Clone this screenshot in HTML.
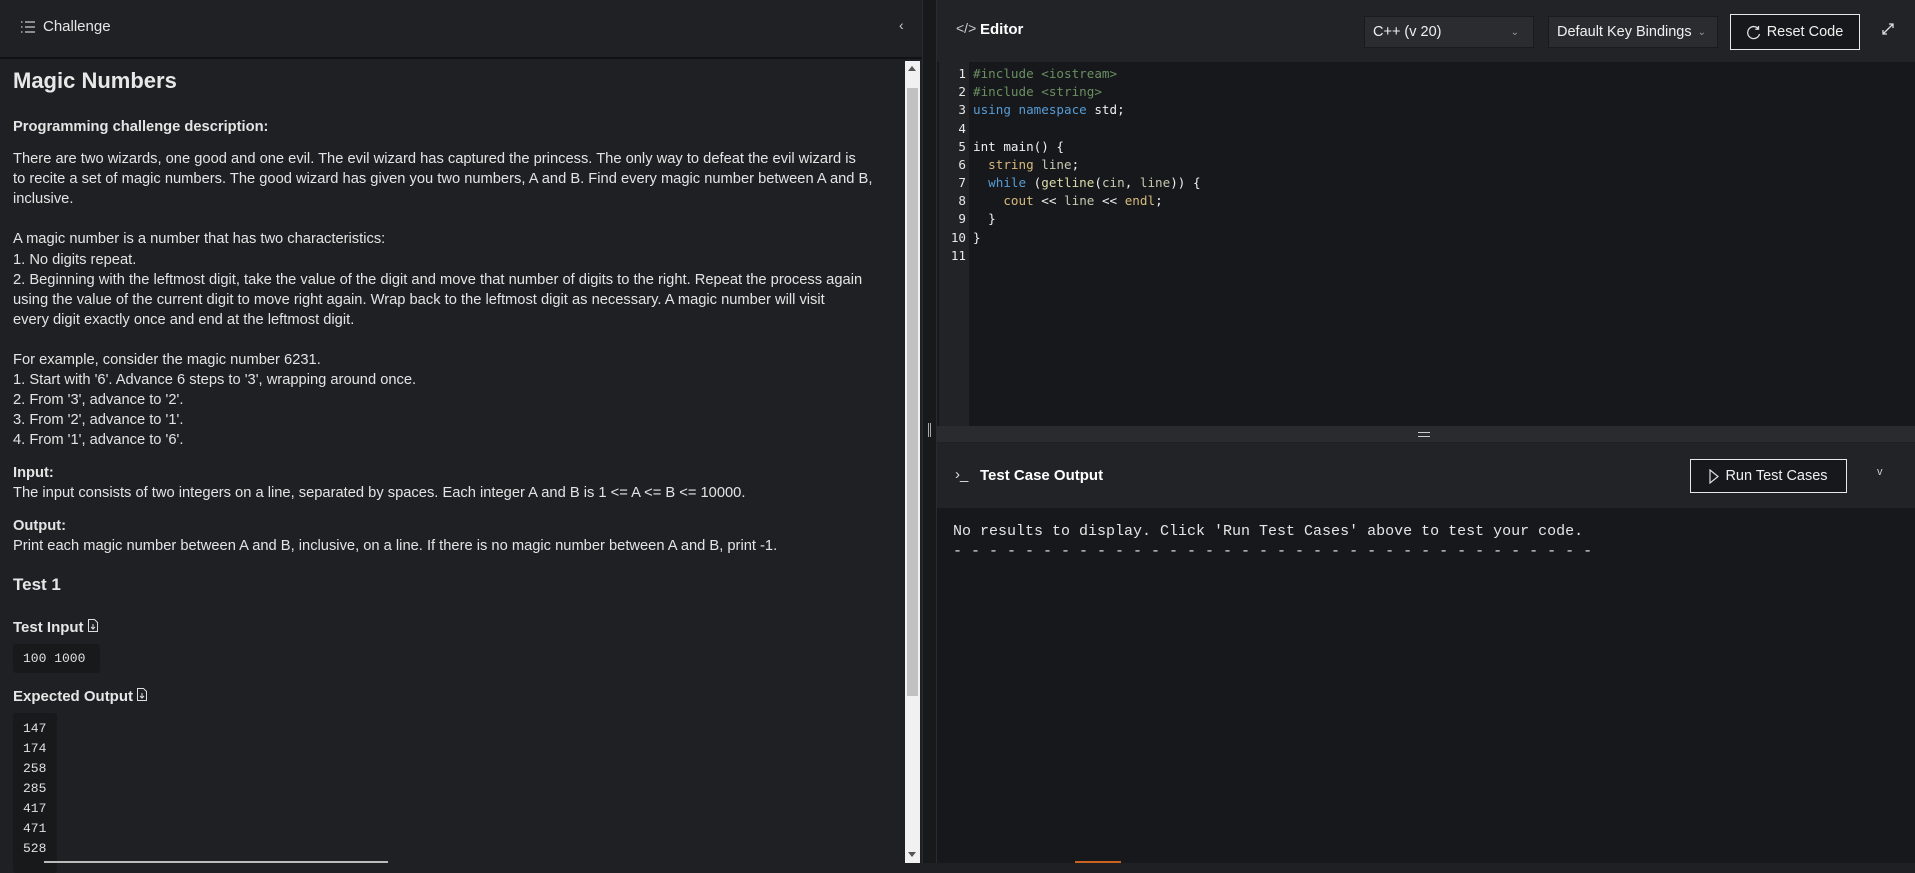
<!DOCTYPE html>
<html><head><meta charset="utf-8">
<style>
*{box-sizing:border-box;margin:0;padding:0}
html,body{width:1915px;height:863px;overflow:hidden;background:#1f2023;font-family:"Liberation Sans",sans-serif;color:#e6e6e6}
.abs{position:absolute}
#left{left:0;top:0;width:922px;height:863px;background:#1f2023}
#lhead{left:0;top:0;width:922px;height:59px;background:#202124;border-bottom:2px solid #111214}
#desc{left:13px;top:61px;width:890px;font-size:14.7px;line-height:20.1px;color:#e4e4e4}
#desc p{margin:0}
h1{font-size:22px;font-weight:bold;color:#e8e8e8}
.b{font-weight:bold}
#sb{left:905px;top:61px;width:15px;height:802px;background:#f1f1f1}
#thumb{left:907px;top:88px;width:11px;height:608px;background:#c1c1c1}
#div{left:922px;top:0;width:15px;height:863px;background:#18191b;border-left:1px solid #2a2b2e;border-right:1px solid #2a2b2e}
#ehead{left:937px;top:0;width:978px;height:62px;background:#222326}
#code{left:937px;top:62px;width:978px;height:364px;background:#17181b}
#gut{left:939px;top:62px;width:30px;height:364px;background:#222326}
.ln{position:absolute;left:939px;width:27px;text-align:right;font-family:"DejaVu Sans Mono","Liberation Mono",monospace;font-size:12.6px;color:#e8e8e8}
.cl{position:absolute;left:973px;font-family:"DejaVu Sans Mono","Liberation Mono",monospace;font-size:12.6px;color:#f0f0f0;white-space:pre}
.cm{color:#6a8f62}.kw{color:#569cd6}.ty{color:#d7ba7d}.fn{color:#dcdcaa}.vr{color:#c8c8b0}
#split{left:937px;top:426px;width:978px;height:16px;background:#2a2b2e}
#thead{left:937px;top:443px;width:978px;height:65px;background:#222326}
#out{left:937px;top:508px;width:978px;height:355px;background:#17181b}
.sel{position:absolute;background:#2b2c30;border:1px solid #1a1b1d;font-size:14.5px;color:#f0f0f0;padding-left:8px;display:flex;align-items:center}
.btn{position:absolute;border:1.5px solid #e8e8e8;background:#17181b;font-size:14.5px;color:#f0f0f0;display:flex;align-items:center;justify-content:center;gap:6px}
.mono{font-family:"Liberation Mono",monospace;font-size:13px;color:#e0e0e0}
</style></head><body>
<div id="left" class="abs"></div>
<div id="lhead" class="abs">
 <svg class="abs" style="left:21px;top:21px" width="14" height="12" viewBox="0 0 14 12" fill="none" stroke="#ccc" stroke-width="1.2"><path d="M0 1h1.5M4 1h10M0 6h1.5M4 6h10M0 11h1.5M4 11h10"/></svg>
 <div class="abs" style="left:43px;top:18px;font-size:15px;color:#e6e6e6">Challenge</div>
 <div class="abs" style="left:899px;top:17px;font-size:14px;color:#ccc">‹</div>
</div>
<div id="desc" class="abs">
 <h1 style="margin-top:7px;line-height:26px">Magic Numbers</h1>
 <p class="b" style="margin-top:23px">Programming challenge description:</p>
 <p style="margin-top:12px">There are two wizards, one good and one evil. The evil wizard has captured the princess. The only way to defeat the evil wizard is<br>to recite a set of magic numbers. The good wizard has given you two numbers, A and B. Find every magic number between A and B,<br>inclusive.<br><br>A magic number is a number that has two characteristics:<br>1. No digits repeat.<br>2. Beginning with the leftmost digit, take the value of the digit and move that number of digits to the right. Repeat the process again<br>using the value of the current digit to move right again. Wrap back to the leftmost digit as necessary. A magic number will visit<br>every digit exactly once and end at the leftmost digit.<br><br>For example, consider the magic number 6231.<br>1. Start with '6'. Advance 6 steps to '3', wrapping around once.<br>2. From '3', advance to '2'.<br>3. From '2', advance to '1'.<br>4. From '1', advance to '6'.</p>
 <p class="b" style="margin-top:12px">Input:</p>
 <p>The input consists of two integers on a line, separated by spaces. Each integer A and B is 1 &lt;= A &lt;= B &lt;= 10000.</p>
 <p class="b" style="margin-top:13px">Output:</p>
 <p>Print each magic number between A and B, inclusive, on a line. If there is no magic number between A and B, print -1.</p>
</div>
<div class="abs b" style="left:13px;top:575px;font-size:17px">Test 1</div>
<div class="abs b" style="left:13px;top:619px;font-size:15px">Test Input <svg width="10" height="13" viewBox="0 0 10 13" fill="none" stroke="#ddd" stroke-width="1"><path d="M.5 .5h6l3 3v9h-9z M5 5v5M3 8l2 2 2-2"/></svg></div>
<div class="abs mono" style="left:13px;top:644px;width:87px;height:29px;background:#18191b;border-radius:3px;padding:7px 0 0 10px">100 1000</div>
<div class="abs b" style="left:13px;top:688px;font-size:15px">Expected Output <svg width="10" height="13" viewBox="0 0 10 13" fill="none" stroke="#ddd" stroke-width="1"><path d="M.5 .5h6l3 3v9h-9z M5 5v5M3 8l2 2 2-2"/></svg></div>
<div class="abs mono" style="left:13px;top:713px;width:44px;height:160px;background:#18191b;border-radius:3px;padding:6px 0 0 10px;line-height:20px">147<br>174<br>258<br>285<br>417<br>471<br>528</div>
<div id="sb" class="abs"></div><div id="thumb" class="abs"></div>
<div class="abs" style="left:908px;top:66px;width:0;height:0;border-left:4px solid transparent;border-right:4px solid transparent;border-bottom:5px solid #555"></div>
<div class="abs" style="left:908px;top:852px;width:0;height:0;border-left:4px solid transparent;border-right:4px solid transparent;border-top:5px solid #555"></div>
<div class="abs" style="left:44px;top:861px;width:344px;height:2px;background:#bbb"></div>
<div id="div" class="abs"><div class="abs" style="left:5px;top:423px;width:3px;height:14px;border-left:1px solid #aaa;border-right:1px solid #aaa"></div></div>

<div id="ehead" class="abs">
 <div class="abs" style="left:19px;top:20px;font-size:14px;color:#ccc">&lt;/&gt;</div>
 <div class="abs b" style="left:43px;top:21px;font-size:15px;color:#fff">Editor</div>
</div>
<div class="sel" style="left:1364px;top:16px;width:170px;height:32px">C++ (v 20)<span style="position:absolute;right:14px;font-size:10px;color:#999">⌄</span></div>
<div class="sel" style="left:1548px;top:16px;width:170px;height:32px">Default Key Bindings<span style="margin-left:6px;font-size:10px;color:#999">⌄</span></div>
<div class="btn" style="left:1730px;top:14px;width:130px;height:36px"><svg width="14" height="15" viewBox="0 0 14 15" fill="none" stroke="#ddd" stroke-width="1.3"><path d="M11.5 4A6 6 0 1 0 12.5 9M11.5 1v3.2H8.3"/></svg>Reset Code</div>
<svg class="abs" style="left:1881px;top:22px" width="14" height="14" viewBox="0 0 14 14" fill="none" stroke="#ddd" stroke-width="1.3"><path d="M2 12L12 2M8 2h4v4M2 8v4h4"/></svg>
<div id="code" class="abs"></div><div id="gut" class="abs"></div>
<div class="ln" style="top:66px">1</div><div class="cl" style="top:66px"><span class="cm">#include &lt;iostream&gt;</span></div>
<div class="ln" style="top:84px">2</div><div class="cl" style="top:84px"><span class="cm">#include &lt;string&gt;</span></div>
<div class="ln" style="top:102px">3</div><div class="cl" style="top:102px"><span class="kw">using namespace</span> std;</div>
<div class="ln" style="top:121px">4</div>
<div class="ln" style="top:139px">5</div><div class="cl" style="top:139px">int main() {</div>
<div class="ln" style="top:157px">6</div><div class="cl" style="top:157px">  <span class="ty">string</span> <span class="vr">line</span>;</div>
<div class="ln" style="top:175px">7</div><div class="cl" style="top:175px">  <span class="kw">while</span> (<span class="fn">getline</span>(<span class="vr">cin</span>, <span class="vr">line</span>)) {</div>
<div class="ln" style="top:193px">8</div><div class="cl" style="top:193px">    <span class="ty">cout</span> &lt;&lt; <span class="vr">line</span> &lt;&lt; <span class="ty">endl</span>;</div>
<div class="ln" style="top:211px">9</div><div class="cl" style="top:211px">  }</div>
<div class="ln" style="top:230px">10</div><div class="cl" style="top:230px">}</div>
<div class="ln" style="top:248px">11</div>
<div id="split" class="abs"><div class="abs" style="left:481px;top:6px;width:12px;height:5px;border-top:1.5px solid #ccc;border-bottom:1.5px solid #ccc"></div></div>
<div id="thead" class="abs">
 <div class="abs" style="left:18px;top:23px;font-size:15px;color:#ddd">›_</div>
 <div class="abs b" style="left:43px;top:24px;font-size:15px;color:#fff">Test Case Output</div>
 <div class="abs" style="left:940px;top:23px;font-size:11px;color:#ccc">v</div>
</div>
<div class="btn" style="left:1690px;top:459px;width:157px;height:34px"><svg width="10" height="15" viewBox="0 0 10 15" fill="none" stroke="#ddd" stroke-width="1.2"><path d="M1 1l8 6.5L1 14z"/></svg>Run Test Cases</div>
<div id="out" class="abs"></div>
<div class="abs" style="left:953px;top:523px;font-family:'Liberation Mono',monospace;font-size:15px;color:#e6e6e6;white-space:pre">No results to display. Click 'Run Test Cases' above to test your code.</div>
<div class="abs" style="left:953px;top:543px;font-family:'Liberation Mono',monospace;font-size:15px;color:#e6e6e6;white-space:pre">- - - - - - - - - - - - - - - - - - - - - - - - - - - - - - - - - - - -</div>
<div class="abs" style="left:1075px;top:861px;width:46px;height:2px;background:#c8641e"></div>
</body></html>
